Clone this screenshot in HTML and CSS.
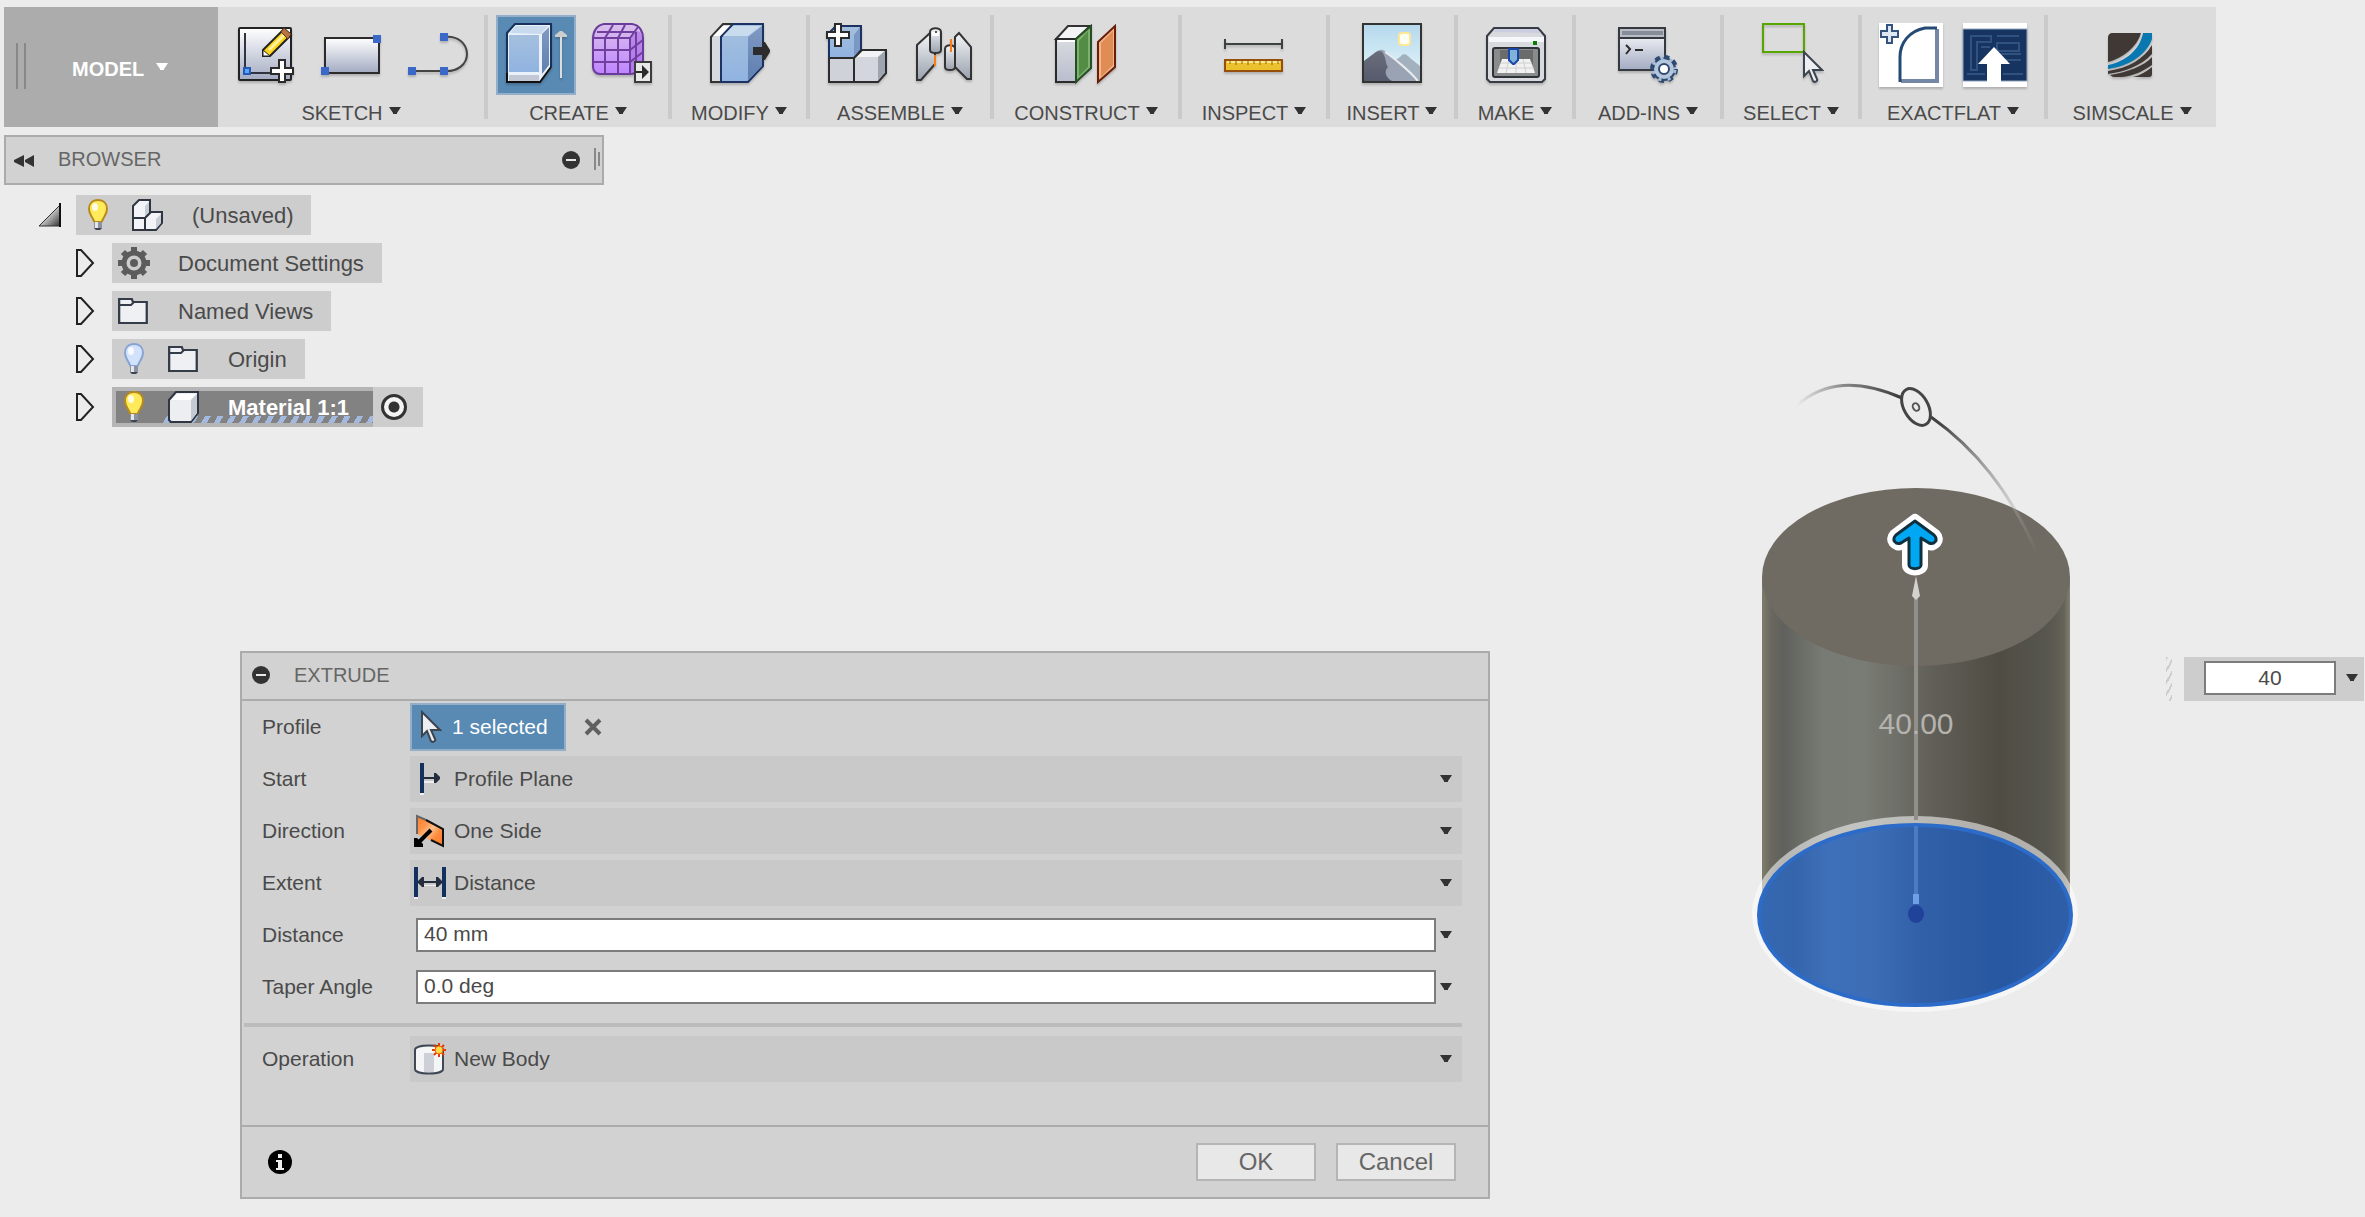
FILE: index.html
```html
<!DOCTYPE html>
<html lang="en">
<head>
<meta charset="utf-8">
<title>Extrude</title>
<link rel="stylesheet" href="styles.css">
</head>
<body>
<svg class="defs" aria-hidden="true">
  <defs>
    <linearGradient id="silver" x1="0" y1="0" x2="0" y2="1"><stop offset="0" stop-color="#fff"/><stop offset="1" stop-color="#a3abc2"/></linearGradient>
    <linearGradient id="pale" x1="0" y1="0" x2="0" y2="1"><stop offset="0" stop-color="#d8dbe0"/><stop offset="1" stop-color="#b9bdcd"/></linearGradient>
    <linearGradient id="blue" x1="0" y1="0" x2="0" y2="1"><stop offset="0" stop-color="#a5c0de"/><stop offset="1" stop-color="#90b3e0"/></linearGradient>
    <linearGradient id="blueside" x1="0" y1="0" x2="0" y2="1"><stop offset="0" stop-color="#7f99c2"/><stop offset="1" stop-color="#5f7fb0"/></linearGradient>
    <linearGradient id="purple" x1="0" y1="0" x2="0" y2="1"><stop offset="0" stop-color="#d9c0ec"/><stop offset="1" stop-color="#bf85ff"/></linearGradient>
    <linearGradient id="leaf" x1="0" y1="0" x2="0" y2="1"><stop offset="0" stop-color="#f4f5f7"/><stop offset="1" stop-color="#9aa2ae"/></linearGradient>
    <linearGradient id="sky" x1="0" y1="0" x2="0" y2="1"><stop offset="0" stop-color="#b4d8ec"/><stop offset="1" stop-color="#e8f8fc"/></linearGradient>
    <linearGradient id="hill" x1="0" y1="0" x2="0" y2="1"><stop offset="0" stop-color="#6b6e7c"/><stop offset="1" stop-color="#555a6c"/></linearGradient>
    <linearGradient id="orange" x1="0" y1="0" x2="1" y2="1"><stop offset="0" stop-color="#ff7a2a"/><stop offset=".3" stop-color="#ff944a"/><stop offset=".5" stop-color="#ffc08c"/><stop offset=".7" stop-color="#ff8a3c"/><stop offset="1" stop-color="#ff7a2a"/></linearGradient>
    <linearGradient id="corner" x1="0" y1="0" x2="1" y2="1"><stop offset=".4" stop-color="#ddd"/><stop offset="1" stop-color="#333"/></linearGradient>
    <symbol id="caret" viewBox="0 0 12 8"><path d="M0 0h12L8 6v1H4V6z" fill="currentColor"/></symbol>
    <symbol id="minus" viewBox="0 0 18 18"><circle cx="9" cy="9" r="9" fill="#333"/><path d="M4 8h10v2H4z" fill="#e8e8e8"/></symbol>
    <symbol id="expand" viewBox="0 0 20 28"><path d="M1 1h4l12 13L5 27H1z" fill="#ececec" stroke="#222" stroke-width="2"/></symbol>
    <symbol id="plus" viewBox="0 0 24 24"><path d="M9 1h6v8h8v6h-8v8H9v-8H1V9h8z" fill="#fff" stroke="#2b2b2b" stroke-width="2"/></symbol>
    <symbol id="folder" viewBox="0 0 32 32"><path d="M1 4h11l1 3h12v21H1z" fill="#eff0f3" stroke="#343b49" stroke-width="2" transform="scale(1.15 1)"/><path d="M1 10h12l3-3" fill="none" stroke="#343b49" stroke-width="2"/></symbol>
    <symbol id="bulb" viewBox="0 0 32 32"><path d="M16 1c6 0 9 4 9 9 0 4-2 6-4 10-1 2-1 3-2 3h-6c-1 0-1-1-2-3-2-4-4-6-4-10 0-5 3-9 9-9z" fill="var(--glass)" stroke="var(--rim)" stroke-width="2"/><ellipse cx="13" cy="8" rx="3" ry="4" fill="#fff" opacity=".8"/><path d="M12 23h8v6l-2 2h-4l-2-2z" fill="#8b93a2"/><path d="M13 23h3v6h-3z" fill="#e4e6ea"/><path d="M12 29h8l-2 2h-4z" fill="#3d4351"/></symbol>
    <symbol id="cursor" viewBox="0 0 22 34"><path d="M2 2v24l5-5 4 10c2 2 5 0 4-2l-4-9h9z" fill="#eceef2" stroke="#3c444e" stroke-width="2"/></symbol>
  </defs>
</svg>

<header class="toolbar">
  <button class="workspace"><span class="grip"></span><span class="caption">MODEL <svg class="caret"><use href="#caret"/></svg></span></button>

  <section class="group">
    <div class="tiles">
      <button class="tile" aria-label="Create sketch"><svg class="icon" viewBox="0 0 64 64">
        <rect x="4" y="5" width="52" height="52" rx="1" fill="url(#silver)" stroke="#222" stroke-width="2"/>
        <path d="M10 10v40h30" fill="none" stroke="#2f3440" stroke-width="2"/><rect x="8" y="44" width="8" height="8" fill="#2459b5"/><rect x="10" y="46" width="4" height="4" fill="#5aa5ff"/>
        <path d="M28 27 49 6l7 6-21 21h-7z" fill="#ffd21c" stroke="#222" stroke-width="2"/><path d="M28 27l7 6h-7z" fill="#fff" stroke="#222"/><path d="M34 27 49 12" stroke="#fff3a0" stroke-width="3"/><path d="M46 9l3-4 7 6-3 5z" fill="#b9733f" stroke="#5a3a20"/>
        <use href="#plus" x="35" y="36" width="24" height="24"/></svg></button>
      <button class="tile" aria-label="Rectangle"><svg class="icon" viewBox="0 0 64 64">
        <rect x="6" y="15" width="54" height="35" fill="url(#silver)" stroke="#2b2b2b" stroke-width="2"/><path d="M54 12h8v8h-8zM2 44h8v8H2z" fill="#3b69c9"/></svg></button>
      <button class="tile" aria-label="Line"><svg class="icon" viewBox="0 0 64 64">
        <path d="M41 14c14-2 23 7 23 17s-9 18-23 17H9" fill="none" stroke="#444" stroke-width="2"/><path d="M37 10h8v8h-8zM37 44h8v8h-8zM5 44h8v8H5z" fill="#3b69c9"/></svg></button>
    </div>
    <button class="menu">SKETCH <svg class="caret"><use href="#caret"/></svg></button>
  </section>

  <section class="group">
    <div class="tiles">
      <button class="tile active" aria-label="Extrude"><svg class="icon" viewBox="0 0 64 64">
        <path d="M11 1h36v44L36 59H3V10z" fill="#eaf1f8"/><path d="M6 10 12 3h32l-7 8z" fill="#c8dbee"/><path d="M5 12h30v37H5z" fill="url(#blue)"/><path d="M38 11l7-7v38l-7 9z" fill="url(#blueside)"/><path d="M5 52h30v6H5z" fill="#c3c7d6"/>
        <path d="M3 50V10l8-9h36v43" fill="none" stroke="#17305e" stroke-width="2"/><path d="M3 50v9h33l11-15" fill="none" stroke="#111" stroke-width="2"/><path d="M57 55V12" stroke="#ddd" stroke-width="2"/><path d="M51 14v-2l5-4h2l5 4v2z" fill="#ccc"/></svg></button>
      <button class="tile" aria-label="Create form"><svg class="icon" viewBox="0 0 64 64">
        <path d="M16 1h28c8 1 11 8 11 14v22c-1 8-6 14-13 14H12c-4 0-7-3-7-7V16C5 8 9 2 16 1z" fill="url(#purple)" stroke="#6b3b9c" stroke-width="2"/>
        <path d="M42 15c3-8 8-9 12-4v26c-3 8-7 10-12 13z" fill="#a86ae6" opacity=".6"/>
        <path d="M5 15h37v36M5 27h37l13-10M5 39h37l13-10M17 51V15l8-13M30 51V15l7-13M42 15l8-11M9 9h37M48 45V9" fill="none" stroke="#713f9e" stroke-width="2"/>
        <rect x="47" y="39" width="16" height="20" fill="#e8e8e8" stroke="#3b3b3b" stroke-width="2"/><path d="M48 48h6v-6l7 7-7 7v-6h-6z" fill="#2b2b2b"/></svg></button>
    </div>
    <button class="menu">CREATE <svg class="caret"><use href="#caret"/></svg></button>
  </section>

  <section class="group">
    <div class="tiles">
      <button class="tile" aria-label="Press pull"><svg class="icon" viewBox="0 0 64 64">
        <path d="M4 14 16 1h12L14 14v45H4z" fill="#d7dbe1" stroke="#333" stroke-width="2"/><path d="M6 13 16 3h7L13 13z" fill="#fff"/>
        <path d="M14 14 26 1h30v42L41 59H14z" fill="url(#blue)" stroke="#1c3263" stroke-width="2"/><path d="M16 13 26 3h28L41 13z" fill="#c8dcee"/><path d="M41 14 55 3v40L41 57z" fill="url(#blueside)"/>
        <path d="M46 24h9v-5h3l5 8v2l-5 8h-3v-5h-9z" fill="#2c2c2c"/></svg></button>
    </div>
    <button class="menu">MODIFY <svg class="caret"><use href="#caret"/></svg></button>
  </section>

  <section class="group">
    <div class="tiles">
      <button class="tile" aria-label="New component"><svg class="icon" viewBox="0 0 64 64">
        <path d="M3 10 10 3h25v24L28 35H3z" fill="url(#blue)" stroke="#1c3263" stroke-width="2"/><path d="M28 12 34 4v22l-6 8z" fill="#7b97c4"/>
        <path d="M3 35h25v24H3z" fill="#cfd2d9" stroke="#2c2c2c" stroke-width="2"/><path d="M28 35l8-8h24v23l-8 9H28z" fill="#d3d6dc" stroke="#2c2c2c" stroke-width="2"/><path d="M31 34l6-6h21l-6 6z" fill="#f2f3f5"/><path d="M52 34l7-6v21l-7 9z" fill="#9ea5ae"/>
        <use href="#plus" x="0" y="0" width="24" height="24"/></svg></button>
      <button class="tile" aria-label="Joint"><svg class="icon" viewBox="0 0 64 64">
        <path d="M7 22 20 10h5v31L11 57H7z" fill="url(#leaf)" stroke="#333" stroke-width="2"/><path d="M20 9c0-5 11-5 11 0v18c0 4-11 4-11 0z" fill="url(#leaf)" stroke="#333" stroke-width="2"/><path d="M22 9h7v4h-7z" fill="#fff"/><circle cx="26" cy="9" r="1" fill="#222"/><path d="M25 32v11" stroke="#ff7a10" stroke-width="2"/>
        <path d="M45 14l4-4 12 14v32h-4L45 44z" fill="url(#leaf)" stroke="#333" stroke-width="2"/><path d="M35 26c0-5 10-5 10 0v18c0 4-10 4-10 0z" fill="url(#leaf)" stroke="#333" stroke-width="2"/><path d="M41 16v13" stroke="#ff7a10" stroke-width="2"/></svg></button>
    </div>
    <button class="menu">ASSEMBLE <svg class="caret"><use href="#caret"/></svg></button>
  </section>

  <section class="group">
    <div class="tiles">
      <button class="tile" aria-label="Offset plane"><svg class="icon" viewBox="0 0 64 64">
        <path d="M2 16 14 3h22L22 16z" fill="#f3f4f6" stroke="#333" stroke-width="2"/><path d="M2 16h20v43H2z" fill="url(#pale)" stroke="#2b2b2b" stroke-width="2"/><path d="M4 18h17" stroke="#fff" stroke-width="2"/><path d="M22 16 37 3v42L22 59z" fill="#7fb070" stroke="#234f23" stroke-width="2"/><path d="M25 18 34 8v36l-9 9z" fill="#538c45"/>
        <path d="M44 19 61 3v41L44 59z" fill="#f2b58c" stroke="#6b1f08" stroke-width="2"/><path d="M47 20 59 8v34L47 54z" fill="#e08c55"/></svg></button>
    </div>
    <button class="menu">CONSTRUCT <svg class="caret"><use href="#caret"/></svg></button>
  </section>

  <section class="group">
    <div class="tiles">
      <button class="tile" aria-label="Measure"><svg class="icon" viewBox="0 0 64 64">
        <path d="M3 16v10M60 16v10M3 21h57" stroke="#3d4240" stroke-width="2"/><rect x="3" y="37" width="57" height="11" fill="#ebc22e" stroke="#96500c" stroke-width="2"/><path d="M5 39h53" stroke="#ffe784" stroke-width="2"/><path d="M8 38v3M14 38v4M20 38v3M26 38v4M32 38v3M38 38v4M44 38v3M50 38v4M56 38v3" stroke="#8d6408" stroke-width="1"/></svg></button>
    </div>
    <button class="menu">INSPECT <svg class="caret"><use href="#caret"/></svg></button>
  </section>

  <section class="group">
    <div class="tiles">
      <button class="tile" aria-label="Insert image"><svg class="icon" viewBox="0 0 64 64">
        <rect x="3" y="1" width="58" height="58" fill="url(#sky)"/><path d="M31 40 40 34c4-5 7-2 10 1l10 8v15H40z" fill="#a3b1bf"/><path d="M4 38 16 29c4-3 7-3 10 0l35 29H4z" fill="#9aa3b3"/><path d="M4 38 16 29c3-2 6-1 7 1 4 8 2 10 5 14-4 4-3 10 4 14H4z" fill="url(#hill)"/><path d="M25 29c6 4 24 18 33 29" fill="none" stroke="#e9ecee" stroke-width="2"/><rect x="39" y="10" width="11" height="12" rx="3" fill="#fffef5" stroke="#ffe893" stroke-width="2"/><rect x="3" y="1" width="58" height="58" fill="none" stroke="#333" stroke-width="2"/></svg></button>
    </div>
    <button class="menu">INSERT <svg class="caret"><use href="#caret"/></svg></button>
  </section>

  <section class="group">
    <div class="tiles">
      <button class="tile" aria-label="3D print"><svg class="icon" viewBox="0 0 64 64">
        <path d="M4 13 11 5h44l7 8v43l-3 3H7l-3-3z" fill="#d9dade" stroke="#363b46" stroke-width="2"/><path d="M6 14h55v5H6z" fill="#f6f7fa"/><path d="M10 9 13 6h41l4 4z" fill="#cbcde0"/><rect x="50" y="18" width="4" height="4" fill="#087d08"/><rect x="10" y="25" width="46" height="29" rx="2" fill="#8a8c8c" stroke="#2d3338" stroke-width="2"/><path d="M17 27h33v14H17z" fill="#696b6c"/><path d="M19 36h28l5 14H14z" fill="#f1f1f1"/><path d="M18 40h31M16 45h35M26 36l-3 14M33 36v14M40 36l3 14" stroke="#d0d0d0"/><path d="M26 26h9v11l-4 4h-1l-4-4z" fill="#7fb3da" stroke="#1847a8" stroke-width="2"/></svg></button>
    </div>
    <button class="menu">MAKE <svg class="caret"><use href="#caret"/></svg></button>
  </section>

  <section class="group">
    <div class="tiles">
      <button class="tile" aria-label="Scripts and add-ins"><svg class="icon" viewBox="0 0 64 64">
        <rect x="3" y="5" width="46" height="42" fill="url(#silver)" stroke="#353940" stroke-width="2"/><path d="M4 6h44v9H4z" fill="#b9bcc5"/><path d="M6 8h41v4H6z" fill="#878c99"/><path d="M3 15h46" stroke="#353940" stroke-width="2"/><path d="M10 22l4 4-4 5M19 27h8" fill="none" stroke="#2c2c2c" stroke-width="2"/>
        <circle cx="48" cy="46" r="11" fill="#b4c6dd" stroke="#2f4a70" stroke-width="2"/><circle cx="48" cy="46" r="12" fill="none" stroke="#2f4a70" stroke-width="4" stroke-dasharray="5 4.4"/><circle cx="48" cy="46" r="11" fill="none" stroke="#a8bdd8" stroke-width="3" stroke-dasharray="3 6.4" stroke-dashoffset="-1"/><circle cx="48" cy="46" r="5" fill="#fff" stroke="#2f4a70" stroke-width="2"/></svg></button>
    </div>
    <button class="menu">ADD-INS <svg class="caret"><use href="#caret"/></svg></button>
  </section>

  <section class="group">
    <div class="tiles">
      <button class="tile" aria-label="Select"><svg class="icon" viewBox="0 0 64 64">
        <rect x="4" y="1" width="41" height="28" fill="none" stroke="#57a600" stroke-width="2"/><use href="#cursor" x="43" y="27" width="22" height="34"/></svg></button>
    </div>
    <button class="menu">SELECT <svg class="caret"><use href="#caret"/></svg></button>
  </section>

  <section class="group">
    <div class="tiles">
      <button class="tile" aria-label="ExactFlat pattern"><svg class="icon" viewBox="0 0 64 64">
        <path d="M0 0h64v64H0z" fill="#fff"/><path d="M58 6v52H22" fill="none" stroke="#7488a6" stroke-width="4"/><path d="M58 5H46C30 8 21 20 21 34v25" fill="none" stroke="#254a76" stroke-width="3"/><path d="M8 2h5v6h6v6h-6v6H8v-6H2V8h6z" fill="#dfe7f0" stroke="#34547e" stroke-width="2"/></svg></button>
      <button class="tile" aria-label="ExactFlat upload"><svg class="icon" viewBox="0 0 64 64">
        <path d="M0 0h64v64H0z" fill="#fff"/><path d="M0 6h64v52H0z" fill="#16345f" stroke="#93a5bf" stroke-width="1"/><path d="M8 13h20v6H14v28H8zM34 13h22M34 20h22v8H34zM18 24h9M38 37h20M34 31h24M4 51h18M40 51h20" fill="none" stroke="#2f5280" stroke-width="2"/><path d="M31 24 47 41H38v23H24V41h-9z" fill="#fff"/></svg></button>
    </div>
    <button class="menu">EXACTFLAT <svg class="caret"><use href="#caret"/></svg></button>
  </section>

  <section class="group">
    <div class="tiles">
      <button class="tile" aria-label="SimScale"><svg class="icon" viewBox="0 0 64 64">
        <path d="M12 10h29C37 24 23 35 8 39V14c0-2 2-4 4-4z" fill="#3f3835"/><path d="M43 10h9v6C47 31 30 43 8 46v-4C27 38 40 26 43 10z" fill="#0a78b0"/><path d="M52 22v9C41 43 24 49 8 51v-3c20-3 36-12 44-26z" fill="#3f3835"/><path d="M52 34v8c-9 6-18 11-30 12h-9l-3-2c18-3 34-9 42-18z" fill="#3f3835"/><path d="M52 44v7c0 2-1 3-3 3H33c8-2 14-6 19-10z" fill="#3f3835"/></svg></button>
    </div>
    <button class="menu">SIMSCALE <svg class="caret"><use href="#caret"/></svg></button>
  </section>
</header>

<main class="workarea">
  <aside class="browser">
    <header class="browser-head">
      <svg class="rewind" viewBox="0 0 20 12"><path d="M10 0v12L0 7V5zM20 0v12l-9-5V5z" fill="#333"/></svg>
      <h2>BROWSER</h2>
      <svg class="minus"><use href="#minus"/></svg>
      <span class="edge"></span>
    </header>
    <ul class="tree">
      <li class="root"><svg class="open" viewBox="0 0 24 24"><path d="M2 23 23 2v21z" fill="url(#corner)" stroke="#333" stroke-width="1"/><path d="M23 0v24" stroke="#111" stroke-width="2"/></svg>
        <div class="node"><svg class="glyph lit"><use href="#bulb"/></svg>
          <svg class="glyph" viewBox="0 0 32 32"><path d="M1 7l6-6h11v12h12v11l-6 7H1z" fill="#f3f4f7" stroke="#2f3642" stroke-width="2"/><path d="M13 7l4-4v11l-4 5zM24 20l5-5v9l-5 6z" fill="#c9cdd6"/><path d="M1 19h12v12M13 19l6-6" fill="none" stroke="#2f3642" stroke-width="2"/></svg>
          <span>(Unsaved)</span></div></li>
      <li><svg class="expand"><use href="#expand"/></svg>
        <div class="node"><svg class="glyph" viewBox="0 0 32 32"><circle cx="16" cy="16" r="10" fill="none" stroke="#5c5c5c" stroke-width="5"/><path d="M16 0v7M16 25v7M0 16h7M25 16h7M5 5l4 4M23 23l4 4M27 5l-4 4M9 23l-4 4" stroke="#5c5c5c" stroke-width="6"/><circle cx="16" cy="16" r="4" fill="#5c5c5c"/></svg><span>Document Settings</span></div></li>
      <li><svg class="expand"><use href="#expand"/></svg>
        <div class="node"><svg class="glyph"><use href="#folder"/></svg><span>Named Views</span></div></li>
      <li><svg class="expand"><use href="#expand"/></svg>
        <div class="node"><svg class="glyph off"><use href="#bulb"/></svg><svg class="glyph"><use href="#folder"/></svg><span>Origin</span></div></li>
      <li><svg class="expand"><use href="#expand"/></svg>
        <div class="node current"><div class="chosen"><svg class="glyph lit"><use href="#bulb"/></svg><svg class="glyph" viewBox="0 0 32 32"><path d="M1 9 8 1h22v21l-7 9H3l-2-2z" fill="#eceef2" stroke="#2f3642" stroke-width="2"/><path d="M3 9l6-6h19l-6 6z" fill="#fff"/><path d="M23 9l6-6v19l-6 8z" fill="#c5c9d2"/></svg><span>Material 1:1</span></div>
          <input type="radio" checked aria-label="Activate Material 1:1"></div></li>
    </ul>
  </aside>

  <form class="dialog">
    <header class="dialog-head"><svg class="minus"><use href="#minus"/></svg><h2>EXTRUDE</h2></header>
    <div class="fields">
      <div class="row"><span class="name">Profile</span>
        <div class="pick"><button type="button" class="selected"><svg class="pointer"><use href="#cursor"/></svg>1 selected</button>
          <button type="button" class="clear" aria-label="Clear selection"><svg viewBox="0 0 18 18"><path d="M2 2l14 14M16 2 2 16" stroke="#606060" stroke-width="4"/></svg></button></div></div>
      <div class="row"><label for="start">Start</label>
        <div class="drop"><select id="start"><option>Profile Plane</option></select>
          <svg class="mark" viewBox="0 0 32 32"><path d="M6 30h4v2H6zM10 18h12v2H10z" fill="#eee"/><path d="M6 0h4v30H6z" fill="#14305f"/><path d="M10 14h10v-4h2l4 4v2l-4 4h-2v-4H10z" fill="#242d3d"/></svg><svg class="caret"><use href="#caret"/></svg></div></div>
      <div class="row"><label for="direction">Direction</label>
        <div class="drop"><select id="direction"><option>One Side</option></select>
          <svg class="mark" viewBox="0 0 32 32"><path d="M3 1l26 13v17L3 19z" fill="url(#orange)"/><path d="M3 19V1l9 4" fill="none" stroke="#666" stroke-width="2"/><path d="M12 5l17 9v17L17 25" fill="none" stroke="#111" stroke-width="2"/><path d="M17 15 5 27" stroke="#000" stroke-width="4"/><path d="M0 23h3l6 6v3H0z" fill="#000"/></svg><svg class="caret"><use href="#caret"/></svg></div></div>
      <div class="row"><label for="extent">Extent</label>
        <div class="drop"><select id="extent"><option>Distance</option></select>
          <svg class="mark" viewBox="0 0 32 32"><path d="M0 30h4v2H0zM28 30h4v2h-4zM6 18h20v1H6z" fill="#eee"/><path d="M0 0h4v30H0zM28 0h4v30h-4z" fill="#14305f"/><path d="M4 14l4-4h2v4h12v-4h2l4 4v2l-4 4h-2v-4H10v4H8l-4-4z" fill="#242d3d"/></svg><svg class="caret"><use href="#caret"/></svg></div></div>
      <div class="row"><label for="distance">Distance</label>
        <div class="entry"><input id="distance" type="text" value="40 mm"><button type="button" class="more" aria-label="Distance options"><svg class="caret"><use href="#caret"/></svg></button></div></div>
      <div class="row"><label for="taper">Taper Angle</label>
        <div class="entry"><input id="taper" type="text" value="0.0 deg"><button type="button" class="more" aria-label="Taper options"><svg class="caret"><use href="#caret"/></svg></button></div></div>
      <hr>
      <div class="row"><label for="operation">Operation</label>
        <div class="drop"><select id="operation"><option>New Body</option></select>
          <svg class="mark" viewBox="0 0 32 32"><path d="M1 7c0-6 28-6 28 0v19c0 6-28 6-28 0z" fill="#f4f5f7" stroke="#3f4855" stroke-width="2"/><path d="M10 10h10v19H10z" fill="#cdd1d7"/><path d="M25 0v14M18 7h14M20 2l10 10M30 2 20 12" stroke="#e83a00" stroke-width="2"/><circle cx="25" cy="7" r="4" fill="#ffd84a" stroke="#e86000"/></svg><svg class="caret"><use href="#caret"/></svg></div></div>
    </div>
    <footer class="dialog-foot">
      <svg class="info" viewBox="0 0 24 24"><circle cx="12" cy="12" r="12" fill="#000"/><path d="M10 4h4v4h-4zM8 10h6v8h2v2H8v-2h2v-6H8z" fill="#eee"/></svg>
      <button type="button">OK</button><button type="button">Cancel</button>
    </footer>
  </form>

  <svg class="scene" viewBox="1740 370 350 650" role="img" aria-label="Extruded cylinder">
    <defs>
      <linearGradient id="side" gradientUnits="userSpaceOnUse" x1="1762" x2="2070" y1="0" y2="0"><stop offset="0" stop-color="#807c6c"/><stop offset=".03" stop-color="#68685e"/><stop offset=".07" stop-color="#60615c"/><stop offset=".2" stop-color="#787b74"/><stop offset=".33" stop-color="#797c74"/><stop offset=".45" stop-color="#6d6e67"/><stop offset=".56" stop-color="#605e56"/><stop offset=".77" stop-color="#4f4c43"/><stop offset=".93" stop-color="#57574f"/><stop offset=".98" stop-color="#656358"/><stop offset="1" stop-color="#838071"/></linearGradient>
      <linearGradient id="base" x1="0" x2="1" y1="0" y2="0"><stop offset="0" stop-color="#3468b2"/><stop offset=".12" stop-color="#3565ab"/><stop offset=".22" stop-color="#3e70ba"/><stop offset=".36" stop-color="#3c6db5"/><stop offset=".52" stop-color="#3160a8"/><stop offset=".78" stop-color="#2757a0"/><stop offset="1" stop-color="#2f5fa8"/></linearGradient>
      <linearGradient id="arc" gradientUnits="userSpaceOnUse" x1="1796" x2="2038" y1="0" y2="0"><stop offset="0" stop-color="#444" stop-opacity="0"/><stop offset=".2" stop-color="#444" stop-opacity=".6"/><stop offset=".45" stop-color="#333"/><stop offset=".6" stop-color="#444"/><stop offset=".8" stop-color="#999" stop-opacity=".8"/><stop offset=".9" stop-color="#aaa" stop-opacity=".4"/><stop offset="1" stop-color="#aaa" stop-opacity="0"/></linearGradient>
    </defs>
    <path d="M1762 577V915a154 91 0 0 0 308 0V577z" fill="url(#side)"/>
    <ellipse cx="1916" cy="577" rx="154" ry="89" fill="#706b62"/>
    <ellipse cx="1915" cy="914" rx="163" ry="98" fill="#fff" opacity=".55"/>
    <ellipse cx="1915" cy="915" rx="156" ry="90" fill="url(#base)" stroke="#2d6bc8" stroke-width="4"/>
    <path d="M1916 598v222" stroke="#908f89" stroke-width="4"/><path d="M1916 826v74" stroke="#4b7bc4" stroke-width="4"/>
    <path d="M1916 576l4 20-4 4-4-4z" fill="#d3d2cf"/><path d="M1913 894h6v10h-6z" fill="#6f9fe8"/><ellipse cx="1916" cy="914" rx="8" ry="9" fill="#20429a"/>
    <text x="1916" y="734" class="dimension">40.00</text>
    <path d="M1915 520l20 15c5 5-1 11-6 9l-7-4v25c0 6-14 6-14 0v-25l-7 4c-5 2-11-4-6-9z" fill="#fff" stroke="#fff" stroke-width="12" stroke-linejoin="round"/>
    <path d="M1915 521l19 14c5 5 0 10-5 8l-8-5v27c0 5-12 5-12 0v-27l-8 5c-5 2-10-3-5-8z" fill="#00a8f3" stroke="#10303f" stroke-width="3" stroke-linejoin="round"/>
    <path d="M1796 406c28-25 62-27 106-8M1931 417c44 31 79 74 107 138" fill="none" stroke="url(#arc)" stroke-width="3"/>
    <ellipse cx="1916" cy="407" rx="12" ry="20" transform="rotate(-30 1916 407)" fill="#ececec" stroke="#444" stroke-width="3"/><ellipse cx="1916" cy="407" rx="3" ry="4" transform="rotate(-30 1916 407)" fill="none" stroke="#555" stroke-width="2"/>
  </svg>

  <div class="quick"><span class="dots"></span><div class="quick-box"><input type="text" value="40" aria-label="Distance value"><button type="button" class="more" aria-label="Value options"><svg class="caret"><use href="#caret"/></svg></button></div></div>
</main>
</body>
</html>
```
FILE: styles.css
```css
* { box-sizing: border-box; }

body {
  margin: 0;
  min-height: 100vh;
  background: #ececec;
  color: #4a4a4a;
  font: 21px/24px "Liberation Sans", Arial, sans-serif;
}

button, input, select {
  font: inherit;
  color: inherit;
  border: 0;
  margin: 0;
  padding: 0;
  background: none;
  border-radius: 0;
}

svg { display: block; flex: none; overflow: visible; }
h2 { margin: 0; font-size: 20px; font-weight: 400; color: #666; }
.defs { position: absolute; width: 0; height: 0; }
.caret { width: 12px; height: 8px; color: #333; }
.minus { width: 18px; height: 18px; }

/* Toolbar */
.toolbar {
  display: grid;
  grid-template-columns: 214px 270px 184px 138px 184px 188px 148px 128px 118px 148px 138px 186px 168px;
  width: max-content;
  height: 120px;
  margin: 7px 0 8px 4px;
  background: #dcdcdc;
}

.workspace {
  display: flex;
  align-items: center;
  gap: 46px;
  padding-left: 12px;
  background: #acacac;
  color: #fff;
  font-size: 20px;
  font-weight: 700;
}

.workspace .caret { color: #fff; }

.grip {
  width: 10px;
  height: 46px;
  margin-bottom: 2px;
  border: solid #888;
  border-width: 0 2px;
}

.caption, .menu { display: flex; align-items: center; gap: 6px; }
.caption { gap: 12px; padding-top: 4px; }

.group {
  display: flex;
  flex-direction: column;
  align-items: center;
  gap: 6px;
  padding: 8px 4px 0 0;
  background: linear-gradient(#cacaca, #cacaca) right center / 4px 104px no-repeat;
}

.group:last-child { padding-right: 0; background: none; }
.tiles { display: flex; gap: 4px; }
.tile { width: 80px; height: 80px; padding: 8px; }
.active { background: #588ab4; border: 2px solid #92aec8; padding: 6px; }
.icon { width: 64px; height: 64px; filter: drop-shadow(0 2px 1px #0003); }
.menu { font-size: 20px; line-height: 24px; }
.menu .caret, .caption .caret { margin-bottom: 4px; }

/* Browser */
.workarea { position: relative; }
.browser { width: 600px; margin-left: 4px; }

.browser-head {
  display: flex;
  align-items: center;
  height: 50px;
  padding: 0 2px 2px 8px;
  border: 2px solid #ababab;
  background: #d2d2d2;
}

.rewind { width: 20px; height: 12px; margin: 4px 24px 0 0; }
.browser-head h2 { flex: 1; }
.browser-head .minus { margin: 2px 14px 0 0; }
.edge { width: 6px; height: 22px; background: linear-gradient(#888, #888) left / 2px 22px no-repeat, linear-gradient(#888, #888) right / 2px 14px no-repeat; }

.tree {
  display: grid;
  gap: 8px;
  margin: 0;
  padding: 10px 0 0 72px;
  list-style: none;
  font-size: 22px;
}

.tree li { display: flex; align-items: center; gap: 16px; }
.tree .root { gap: 15px; margin-left: -39px; }
.open { width: 24px; height: 24px; }
.expand { width: 20px; height: 28px; }

.node {
  display: flex;
  align-items: center;
  gap: 18px;
  height: 40px;
  padding: 0 18px 0 6px;
  background: #cdcdcd;
}

.node span { margin-left: 10px; padding-top: 2px; }
.glyph { width: 32px; height: 32px; }
.lit { --glass: #ffea5c; --rim: #b88a1c; }
.off { --glass: #d3e2fb; --rim: #87a3d3; }
.current { gap: 8px; padding: 0 16px 0 0; }

.chosen {
  display: flex;
  align-items: center;
  gap: 18px;
  height: 40px;
  padding: 0 24px 0 2px;
  border: solid #b5b5b5;
  border-width: 4px 0 4px 4px;
  background: repeating-linear-gradient(120deg, #0000 0 6px, #a3b9e0 6px 11px) 44px bottom / 100% 7px no-repeat #828282;
  color: #fff;
  font-weight: 700;
}

.current input {
  appearance: none;
  width: 26px;
  height: 26px;
  border: 3px solid #333;
  border-radius: 50%;
  background: radial-gradient(#333 0 5px, #f4f4f4 6px);
}

/* Extrude dialog */
.dialog {
  width: 1250px;
  margin: 224px 0 18px 240px;
  border: 2px solid #ababab;
  background: #d2d2d2;
}

.dialog-head {
  display: flex;
  align-items: center;
  gap: 24px;
  height: 48px;
  padding: 0 10px 2px;
  border-bottom: 2px solid #ababab;
}

.fields { display: grid; gap: 4px; padding: 2px 26px 42px 2px; }
.row { display: grid; grid-template-columns: 148px 1fr; align-items: center; height: 48px; padding-left: 18px; }
.pick { display: flex; align-items: center; gap: 16px; }

.selected {
  display: flex;
  align-items: center;
  gap: 10px;
  width: 156px;
  height: 48px;
  padding-left: 8px;
  border: 2px solid #92aec8;
  background: #588ab4;
  color: #fff;
}

.pointer { width: 22px; height: 34px; }
.clear { padding: 2px; }
.clear svg { width: 18px; height: 18px; }
.drop { display: grid; align-items: center; height: 46px; background: #c9c9c9; }
.drop > * { grid-area: 1 / 1; }
.drop select { appearance: none; width: 100%; height: 46px; padding-left: 44px; }
.drop .mark, .drop .caret { pointer-events: none; }
.mark { width: 32px; height: 32px; margin-left: 4px; }
.drop .caret { justify-self: end; margin-right: 10px; }
.entry { display: flex; align-items: center; gap: 4px; padding: 0 10px 0 6px; }

.entry input {
  flex: 1;
  height: 34px;
  padding: 0 6px 2px;
  border: 2px solid #7c7c7c;
  background: #fff;
}

hr { width: 100%; height: 4px; margin: 8px 0 4px; border: 0; background: #bcbcbc; }

.dialog-foot {
  display: flex;
  align-items: center;
  gap: 20px;
  height: 72px;
  padding: 0 32px 0 26px;
  border-top: 2px solid #ababab;
}

.info { width: 24px; height: 24px; margin-right: auto; }

.dialog-foot button {
  width: 120px;
  height: 38px;
  border: 2px solid #b5b5b5;
  background: #e8e8e8;
  color: #666;
  font-size: 24px;
}

/* Model view */
.scene { position: absolute; left: 1740px; top: 235px; width: 350px; height: 650px; }
.dimension { fill: #b4b3b0; font-size: 30px; text-anchor: middle; }
.quick { position: absolute; right: 1px; top: 522px; display: flex; gap: 12px; }
.dots { width: 6px; background: repeating-linear-gradient(120deg, #ccc 0 2px, #0000 2px 6px); }

.quick-box {
  display: flex;
  align-items: center;
  gap: 10px;
  height: 44px;
  padding: 0 6px 2px 20px;
  background: #cdcdcd;
}

.quick-box input {
  width: 132px;
  height: 34px;
  border: 2px solid #7c7c7c;
  background: #fff;
  text-align: center;
}
```
